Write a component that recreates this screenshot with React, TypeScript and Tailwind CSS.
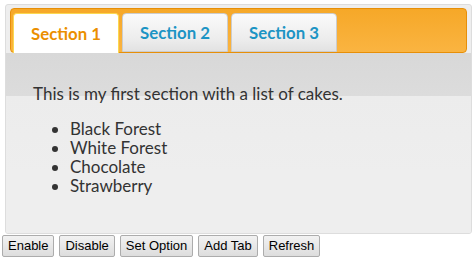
import { useState } from 'react';

const tabs = ['Section 1', 'Section 2', 'Section 3'];
const cakes = ['Black Forest', 'White Forest', 'Chocolate', 'Strawberry'];
const actions = ['Enable', 'Disable', 'Set Option', 'Add Tab', 'Refresh'];

export default function App() {
  const [active, setActive] = useState(0);

  return (
    <div className="w-[474px] h-[258px] bg-white overflow-hidden">
      {/* Tabs widget */}
      <div className="ml-[5px] mt-[4px] w-[467px] h-[230px] border border-[#dddddd] rounded-[3px] bg-[#eeeeee] font-['Lato',sans-serif] overflow-hidden">
        <div className="px-[4px] pt-[3px]">
          <div className="flex gap-[3px] pl-[2px] pt-[4px] h-[45px] border border-[#e78f08] rounded-[4px] bg-[linear-gradient(to_bottom,#f6a828,#fab441)]">
            {tabs.map((t, i) => (
              <button
                key={t}
                onClick={() => setActive(i)}
                className={
                  i === active
                    ? 'w-[106px] h-[40px] flex items-center justify-center rounded-t-[4px] border border-b-0 border-[#fbd850] bg-white text-[#eb8f00] text-[16.8px] font-bold'
                    : 'w-[106px] h-[39px] flex items-center justify-center rounded-t-[4px] border border-[#cccccc] bg-[linear-gradient(to_bottom,#fafafa,#ececec_70%,#e2e2e2)] text-[#1c94c4] text-[16.8px] font-bold'
                }
              >
                {t}
              </button>
            ))}
          </div>
        </div>

        {/* Panel */}
        <div className="h-full px-[27px] pt-[31px] text-[#333333] text-[17px] leading-[19px] bg-[linear-gradient(to_bottom,#d8d8d8_0px,#dcdcdc_43px,#ececec_43px,#eeeeee_120px)]">
          <p>This is my first section with a list of cakes.</p>
          <ul className="list-disc pl-[37px] mt-[16px]">
            {cakes.map((c) => (
              <li key={c}>{c}</li>
            ))}
          </ul>
        </div>
      </div>

      {/* Buttons */}
      <div className="flex gap-[5px] ml-[2px] mt-[1px]">
        {actions.map((a) => (
          <button
            key={a}
            className="px-[5px] py-[3px] border border-[#acacac] rounded-[2px] bg-[linear-gradient(to_bottom,#f2f2f2,#dddddd)] text-black text-[13px] leading-[14px] font-['Liberation_Sans',Arial,sans-serif]"
          >
            {a}
          </button>
        ))}
      </div>
    </div>
  );
}
